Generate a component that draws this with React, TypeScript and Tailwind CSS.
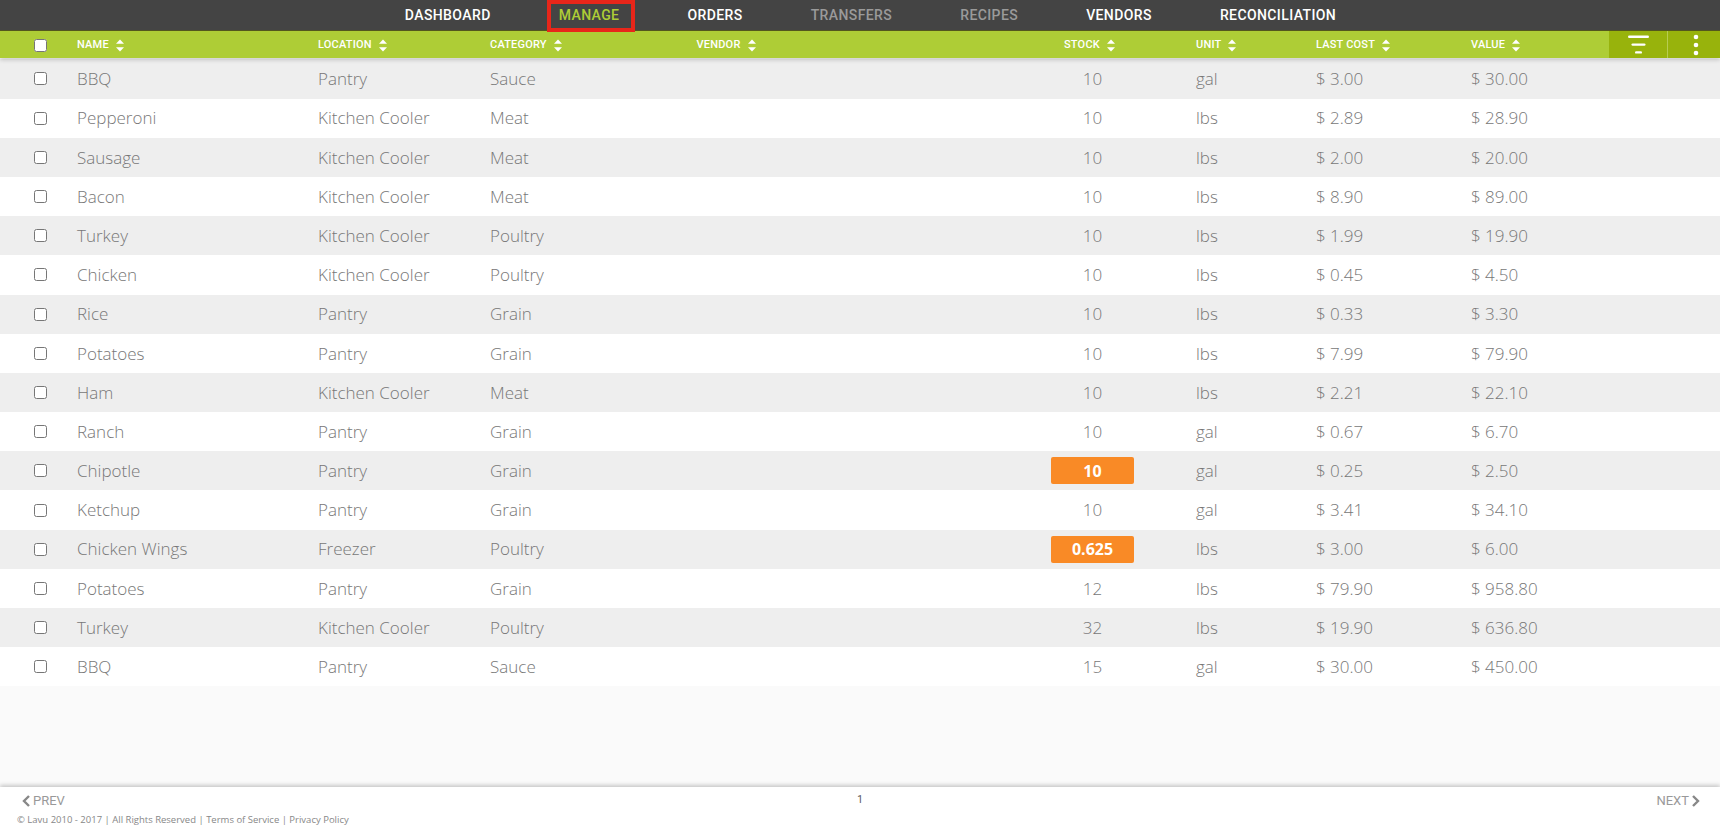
import React from "react";

const rows: [string, string, string, string, string, string, string, boolean?][] = [
  ["BBQ", "Pantry", "Sauce", "10", "gal", "$ 3.00", "$ 30.00"],
  ["Pepperoni", "Kitchen Cooler", "Meat", "10", "lbs", "$ 2.89", "$ 28.90"],
  ["Sausage", "Kitchen Cooler", "Meat", "10", "lbs", "$ 2.00", "$ 20.00"],
  ["Bacon", "Kitchen Cooler", "Meat", "10", "lbs", "$ 8.90", "$ 89.00"],
  ["Turkey", "Kitchen Cooler", "Poultry", "10", "lbs", "$ 1.99", "$ 19.90"],
  ["Chicken", "Kitchen Cooler", "Poultry", "10", "lbs", "$ 0.45", "$ 4.50"],
  ["Rice", "Pantry", "Grain", "10", "lbs", "$ 0.33", "$ 3.30"],
  ["Potatoes", "Pantry", "Grain", "10", "lbs", "$ 7.99", "$ 79.90"],
  ["Ham", "Kitchen Cooler", "Meat", "10", "lbs", "$ 2.21", "$ 22.10"],
  ["Ranch", "Pantry", "Grain", "10", "gal", "$ 0.67", "$ 6.70"],
  ["Chipotle", "Pantry", "Grain", "10", "gal", "$ 0.25", "$ 2.50", true],
  ["Ketchup", "Pantry", "Grain", "10", "gal", "$ 3.41", "$ 34.10"],
  ["Chicken Wings", "Freezer", "Poultry", "0.625", "lbs", "$ 3.00", "$ 6.00", true],
  ["Potatoes", "Pantry", "Grain", "12", "lbs", "$ 79.90", "$ 958.80"],
  ["Turkey", "Kitchen Cooler", "Poultry", "32", "lbs", "$ 19.90", "$ 636.80"],
  ["BBQ", "Pantry", "Sauce", "15", "gal", "$ 30.00", "$ 450.00"],
];

const nav: [string, string][] = [
  ["DASHBOARD", "text-white"],
  ["MANAGE", "text-[#aecd36]"],
  ["ORDERS", "text-white"],
  ["TRANSFERS", "text-[#9a9a9a]"],
  ["RECIPES", "text-[#9a9a9a]"],
  ["VENDORS", "text-white"],
  ["RECONCILIATION", "text-white"],
];

function Sort() {
  return (
    <svg width="8" height="13" viewBox="0 0 8 13" className="ml-[7px] shrink-0" fill="#ffffff">
      <path d="M4 0.5 L8 4.8 H0 Z" />
      <path d="M4 12.5 L8 8.2 H0 Z" />
    </svg>
  );
}

function Head({ label, className }: { label: string; className: string }) {
  return (
    <div className={`flex items-center shrink-0 ${className}`}>
      <span>{label}</span>
      <Sort />
    </div>
  );
}

export default function App() {
  return (
    <div className="h-[826px] w-[1720px] flex flex-col overflow-hidden bg-[#fafafa] font-['Open_Sans',sans-serif]">
      <nav className="relative z-20 h-[30px] shrink-0 bg-[#444444] flex items-center justify-center gap-[68px] pl-[21px] pt-[1px] font-['Roboto',sans-serif] font-medium text-[14px] tracking-[0.4px]">
        {nav.map(([label, color]) => (
          <div key={label} className={`relative ${color}`}>
            {label}
            {label === "MANAGE" && (
              <div className="absolute left-[-12px] right-[-16px] top-[-5px] h-[32px] border-[4px] border-[#e8261a]" />
            )}
          </div>
        ))}
      </nav>
      <div className="h-[1px] shrink-0 bg-[#55591f]" />
      <header className="relative z-10 h-[27px] shrink-0 bg-[#aecd36] shadow-[0_2px_4px_rgba(0,0,0,0.18)] flex items-center text-white font-['Roboto',sans-serif] font-medium text-[11px] tracking-[0.2px]">
        <div className="w-[77px] shrink-0 pl-[34px] pt-[2px] flex items-center">
          <input type="checkbox" className="w-[13px] h-[13px] m-0" />
        </div>
        <Head label="NAME" className="w-[241px] pt-[1px]" />
        <Head label="LOCATION" className="w-[172px] pt-[1px]" />
        <Head label="CATEGORY" className="w-[206.5px] pt-[1px]" />
        <Head label="VENDOR" className="w-[354.5px] pt-[1px]" />
        <Head label="STOCK" className="w-[145px] pl-[13px] pt-[1px]" />
        <Head label="UNIT" className="w-[120px] pt-[1px]" />
        <Head label="LAST COST" className="w-[155px] pt-[1px]" />
        <Head label="VALUE" className="w-[138px] pt-[1px]" />
        <div className="ml-auto h-full w-[111px] bg-[#98b30c] flex">
          <div className="w-[59px] flex items-center justify-center border-r border-[#b7cc52]">
            <svg width="21" height="20" viewBox="0 0 21 20" fill="#ffffff">
              <rect x="0" y="0.5" width="21" height="2.4" rx="1.2" />
              <rect x="3.5" y="8.4" width="14" height="2.4" rx="1.2" />
              <rect x="7" y="16.2" width="7" height="2.4" rx="1.2" />
            </svg>
          </div>
          <div className="flex-1 flex items-center justify-center pl-[3px]">
            <svg width="6" height="22" viewBox="0 0 6 22" fill="#ffffff">
              <circle cx="3" cy="3" r="2.3" />
              <circle cx="3" cy="11" r="2.3" />
              <circle cx="3" cy="19" r="2.3" />
            </svg>
          </div>
        </div>
      </header>
      <main className="flex-1 min-h-0 pt-[1.4px] text-[#777777] font-light text-[17px]">
        {rows.map((r, i) => (
          <div key={i} className={`h-[39.2px] flex items-center ${i % 2 === 0 ? "bg-[#eeeeee]" : "bg-white"}`}>
            <div className="w-[77px] shrink-0 pl-[34px] flex items-center">
              <input type="checkbox" className="w-[13px] h-[13px] m-0" />
            </div>
            <div className="w-[241px] shrink-0">{r[0]}</div>
            <div className="w-[172px] shrink-0">{r[1]}</div>
            <div className="w-[561px] shrink-0">{r[2]}</div>
            <div className="w-[145px] shrink-0">
              {r[7] ? (
                <div className="w-[83px] h-[27px] rounded-[2px] bg-[#f98a26] text-white font-bold text-[16px] flex items-center justify-center">
                  {r[3]}
                </div>
              ) : (
                <div className="w-[83px] text-center">{r[3]}</div>
              )}
            </div>
            <div className="w-[120px] shrink-0">{r[4]}</div>
            <div className="w-[155px] shrink-0">{r[5]}</div>
            <div className="shrink-0">{r[6]}</div>
          </div>
        ))}
      </main>
      <footer className="relative h-[39px] shrink-0 bg-white shadow-[0_-2px_4px_rgba(0,0,0,0.2)] px-[17px] pt-[1px]">
        <div className="h-[26px] flex items-center justify-between font-['Roboto',sans-serif] text-[13px] text-[#999999] pl-[5px] pr-[3px]">
          <div className="flex items-center gap-[3px]">
            <svg width="8" height="12" viewBox="0 0 8 12" fill="none" stroke="#888888" strokeWidth="2.4">
              <path d="M7 1 L2 6 L7 11" />
            </svg>
            <span>PREV</span>
          </div>
          <span className="text-[10px] text-[#555555] mr-[1px] mb-[3px]">1</span>
          <div className="flex items-center gap-[3px]">
            <span>NEXT</span>
            <svg width="8" height="12" viewBox="0 0 8 12" fill="none" stroke="#888888" strokeWidth="2.4">
              <path d="M1 1 L6 6 L1 11" />
            </svg>
          </div>
        </div>
        <div className="text-[9.5px] leading-[12px] text-[#888888]">
          © Lavu 2010 - 2017 | All Rights Reserved | Terms of Service | Privacy Policy
        </div>
      </footer>
    </div>
  );
}
